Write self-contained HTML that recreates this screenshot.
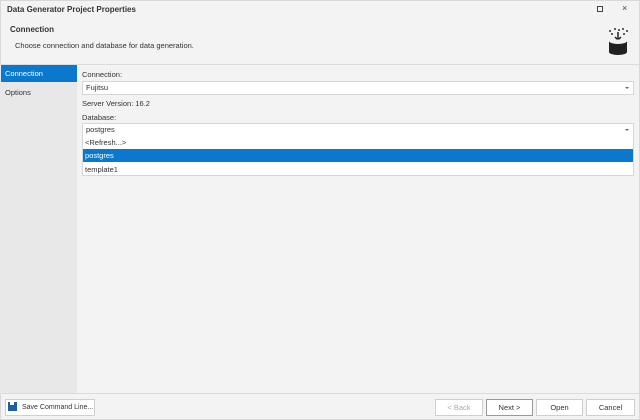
<!DOCTYPE html>
<html><head><style>
*{box-sizing:border-box;margin:0;padding:0}
html,body{width:640px;height:420px;overflow:hidden}
body{background:#f3f3f3;font-family:"Liberation Sans",sans-serif;font-size:8px;color:#333;position:relative}
.a{position:absolute;white-space:nowrap}
.combo{position:absolute;background:#fff;border:1px solid #d6d6d6;height:14px;padding-left:3px;line-height:12px;font-size:7.5px}
.combo .arr{position:absolute;right:4px;top:5px;width:0;height:0;border-left:2px solid transparent;border-right:2px solid transparent;border-top:2px solid #666}
.btn{position:absolute;top:399px;height:17px;background:#fff;border:1px solid #cfcfcf;text-align:center;line-height:15px;font-size:7.5px;white-space:nowrap;overflow:hidden}
</style></head><body>
<div class="a" style="left:0;top:0;width:640px;height:420px;border:1px solid #d8d8d8"></div>
<div class="a" style="left:7px;top:5px;font-weight:bold;font-size:8px">Data Generator Project Properties</div>
<div class="a" style="left:597px;top:6px;width:6px;height:6px;border:1px solid #444"></div>
<div class="a" style="left:622px;top:3px;font-size:9px;color:#444">×</div>
<div class="a" style="left:10px;top:25px;font-weight:bold;font-size:8px">Connection</div>
<div class="a" style="left:15px;top:41px;font-size:7.5px">Choose connection and database for data generation.</div>
<svg class="a" style="left:606px;top:27px" width="24" height="30" viewBox="0 0 24 30">
<g fill="#333"><circle cx="4" cy="4" r="1"/><circle cx="9" cy="2" r="1"/><circle cx="13" cy="3" r="1"/><circle cx="17" cy="2" r="1"/><circle cx="21" cy="4" r="1"/><circle cx="6" cy="7" r="1"/><circle cx="18" cy="7" r="1"/></g>
<path d="M12 5v8M9 10l3 3 3-3" stroke="#222" stroke-width="1.5" fill="none"/>
<path d="M3 14a9 3 0 0 0 18 0v11a9 3 0 0 1-18 0z" fill="#222"/>
<ellipse cx="12" cy="14" rx="6" ry="1.5" fill="#f3f3f3"/>
</svg>
<div class="a" style="left:0;top:64px;width:640px;height:1px;background:#dcdcdc"></div>
<div class="a" style="left:0;top:65px;width:77px;height:328px;background:#e8e8e8"></div>
<div class="a" style="left:1px;top:65px;width:76px;height:17px;background:#0a78cc;color:#fff;line-height:17px;padding-left:4px;font-size:7.5px">Connection</div>
<div class="a" style="left:5px;top:88px;font-size:7.5px">Options</div>
<div class="a" style="left:82px;top:70px;font-size:7.5px">Connection:</div>
<div class="combo" style="left:82px;top:81px;width:552px">Fujitsu<span class="arr"></span></div>
<div class="a" style="left:82px;top:99px;font-size:7.5px">Server Version: 16.2</div>
<div class="a" style="left:82px;top:113px;font-size:7.5px">Database:</div>
<div class="combo" style="left:82px;top:123px;width:552px">postgres<span class="arr"></span></div>
<div class="a" style="left:82px;top:136px;width:552px;height:40px;background:#fff;border:1px solid #d6d6d6;border-top:none"></div>
<div class="a" style="left:85px;top:138px;font-size:7.5px">&lt;Refresh...&gt;</div>
<div class="a" style="left:83px;top:149px;width:550px;height:13px;background:#0a78cc;color:#fff;padding-left:2px;line-height:13px;font-size:7.5px">postgres</div>
<div class="a" style="left:85px;top:165px;font-size:7.5px">template1</div>
<div class="a" style="left:0;top:393px;width:640px;height:1px;background:#dcdcdc"></div>
<div class="btn" style="left:5px;width:90px;text-align:left;padding-left:16px;font-size:7px">Save Command Line...</div>
<svg class="a" style="left:8px;top:402px" width="9" height="9"><rect width="9" height="9" fill="#1c5fa8"/><rect x="2" y="0" width="4" height="3" fill="#fff"/></svg>
<div class="btn" style="left:435px;width:48px;color:#aaa">&lt; Back</div>
<div class="btn" style="left:486px;width:47px;border-color:#999">Next &gt;</div>
<div class="btn" style="left:536px;width:47px">Open</div>
<div class="btn" style="left:586px;width:49px">Cancel</div>
</body></html>
